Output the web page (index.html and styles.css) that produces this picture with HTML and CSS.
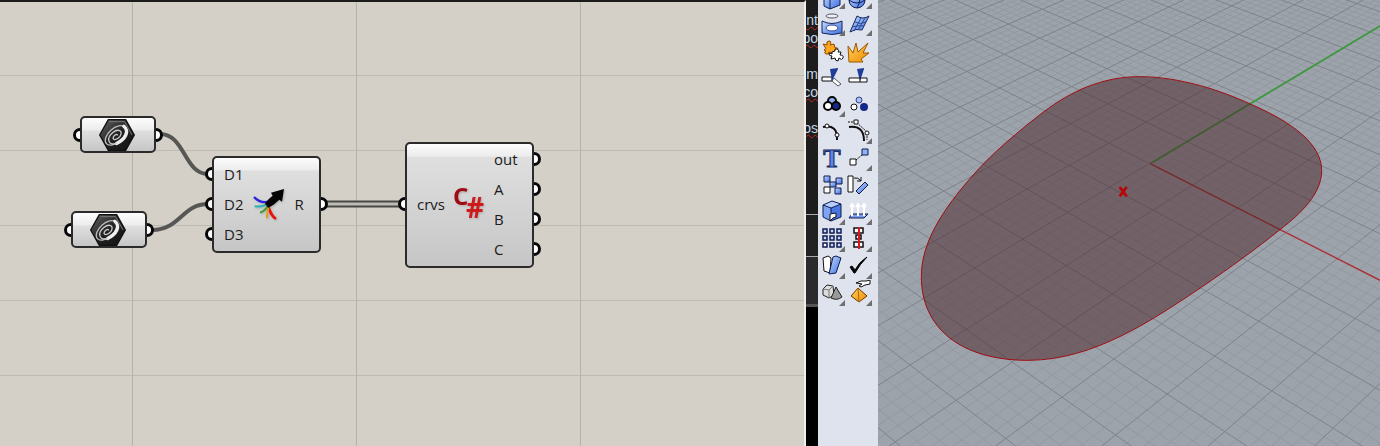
FILE: index.html
```html
<!DOCTYPE html>
<html lang="en">
<head>
<meta charset="utf-8">
<title>Surface from curves</title>
<link rel="stylesheet" href="styles.css">
</head>
<body>
<svg class="defs" aria-hidden="true">
  <defs>
    <linearGradient id="blue" x1="0" y1="0" x2="1" y2="1"><stop offset="0" stop-color="#c4dbff"/><stop offset="1" stop-color="#3f6fe0"/></linearGradient>
    <linearGradient id="gold" x1="0" y1="0" x2="1" y2="1"><stop offset="0" stop-color="#ffd060"/><stop offset="1" stop-color="#f08c00"/></linearGradient>
    <linearGradient id="coal" x1="0" y1="0" x2="1" y2="1"><stop offset="0" stop-color="#666"/><stop offset=".5" stop-color="#222"/><stop offset="1" stop-color="#111"/></linearGradient>
    <symbol id="curve" viewBox="0 0 108 96">
      <path d="M28 2H80L106 48 80 94H28L2 48Z" fill="url(#coal)" stroke="#111" stroke-width="4" stroke-linejoin="round"/>
      <path d="M31 8H77L99 48" fill="none" stroke="#777" stroke-width="3"/>
      <g fill="none" stroke="#eee" transform="rotate(-42 54 48)">
        <ellipse cx="50" cy="46" rx="37" ry="21" stroke="#bbb" stroke-width="4"/>
        <path d="M87 42C90 66 64 74 36 66" stroke-width="10" stroke-linecap="round"/>
        <path d="M36 66C12 54 24 32 50 34C72 36 76 52 58 57C42 60 32 50 42 45C50 42 58 46 54 50" stroke="#ccc" stroke-width="4"/>
      </g>
    </symbol>
  </defs>
</svg>
<main class="app">
  <section class="canvas" aria-label="Node canvas">
    <svg class="wires" width="600" height="300" aria-hidden="true">
      <g fill="none" stroke="#565654" stroke-width="4">
        <path d="M160 134C185 134 184 174 208 174"/>
        <path d="M152 230C180 230 182 204 208 204"/>
      </g>
      <path d="M326 204H400" stroke="#474743" stroke-width="7"/>
      <path d="M326 204H400" stroke="#bdbcb4" stroke-width="3"/>
    </svg>
    <div class="node param first"><i class="port in"></i><svg class="hex"><use href="#curve"/></svg><i class="port out"></i></div>
    <div class="node param second"><i class="port in"></i><svg class="hex"><use href="#curve"/></svg><i class="port out"></i></div>
    <div class="node merge">
      <ul><li><i class="port in"></i>D1</li><li><i class="port in"></i>D2</li><li><i class="port in"></i>D3</li></ul>
      <svg class="icon" viewBox="160 143 96 96" fill="none" stroke-width="6">
        <path d="M205 196C212 215 214 226 229 236" stroke="#e81212" stroke-width="8"/>
        <path d="M206 196C206 212 201 218 202 233" stroke="#e69b1c"/>
        <path d="M206 192C202 204 194 212 181 217" stroke="#389a35"/>
        <path d="M206 188C195 198 182 200 165 198" stroke="#25b4b4"/>
        <path d="M207 184C190 188 174 182 163 170" stroke="#2a22e0" stroke-width="7"/>
        <path d="M196 190C203 180 210 172 219 166L214 157 253 146 247 184 239 178C228 188 220 196 206 202Z" fill="#050505"/>
      </svg>
      <ul class="right"><li>R<i class="port out"></i></li></ul>
    </div>
    <div class="node script">
      <ul><li><i class="port in"></i>crvs</li></ul>
      <svg class="icon" viewBox="0 0 32 32"><text class="c" x="0" y="17">C</text><text class="hash" x="13" y="30">#</text></svg>
      <ul class="right"><li>out<i class="port out"></i></li><li>A<i class="port out"></i></li><li>B<i class="port out"></i></li><li>C<i class="port out"></i></li></ul>
    </div>
  </section>

  <aside class="editor" aria-label="Code editor">
    <p class="line"><span>nt</span></p>
    <p class="line"><span>po</span></p>
    <p class="line"></p>
    <p class="line plain"><span>m</span></p>
    <p class="line"><span>co</span></p>
    <p class="line"></p>
    <p class="line"><span>os</span></p>
    <div class="pane"></div>
    <div class="pane low"></div>
  </aside>

  <nav class="tools" aria-label="Tools">
    <button class="more" aria-label="Box"><svg viewBox="0 0 27 27"><path d="M5 10 16 8 21 11V22L11 26 5 23Z" fill="url(#blue)" stroke="#101c50"/><path d="M5 10 11 14 21 11M11 14V26" fill="none" stroke="#101c50"/></svg></button>
    <button class="more" aria-label="Sphere"><svg viewBox="0 0 27 27"><circle cx="11" cy="17" r="8" fill="url(#blue)" stroke="#101c50"/><path d="M3 17Q11 23 19 17M12 9Q16 17 11 25" fill="none" stroke="#101c50"/></svg></button>

    <button class="more" aria-label="Project curve"><svg viewBox="0 0 27 27"><path d="M3 11Q13 16 23 11V23Q13 26 3 23Z" fill="url(#blue)" stroke="#15265f"/><ellipse cx="13" cy="6" rx="6" ry="2" fill="#eef" stroke="#555"/><ellipse cx="13" cy="18" rx="6" ry="3" fill="#fff" stroke="#334a90"/></svg></button>
    <button class="more" aria-label="Surface"><svg viewBox="0 0 27 27"><path d="M11 6Q17 10 23 6L16 20Q10 18 4 22Z" fill="url(#blue)" stroke="#15265f"/><path d="M9 12Q14 15 20 12M6 17Q12 15 18 16M15 8 8 21M19 8 12 20" fill="none" stroke="#2c4790"/></svg></button>

    <button aria-label="Join"><svg viewBox="0 0 27 27"><path d="M4 7 8 8Q7 4 10 4T11 8L15 7 16 11Q19 10 19 12T15 14L14 16 10 15Q10 18 7 17T7 14L5 13Q8 11 6 10Z" fill="#ffa51e" stroke="#8b4b00"/><path d="M13 15 16 14Q15 11 18 12T19 15L22 15 21 18Q25 18 24 21T20 21L19 24Q16 24 16 21L12 22 13 19Q10 19 10 17T13 17Z" fill="#fff" stroke="#111"/></svg></button>
    <button aria-label="Explode"><svg viewBox="0 0 27 27"><path d="M2 9 7 16 10 6 12 15 22 6 17 16 23 16 15 22 17 25H3Z" fill="url(#gold)" stroke="#9c5900"/></svg></button>

    <button aria-label="Trim"><svg viewBox="0 0 27 27"><path d="M3 13H13V17H3Z" fill="#fff" stroke="#111"/><path d="M15 14 22 20 19 22 13 17Z" fill="#fff" stroke="#555"/><path d="M19 4V5L13 17 11 5Z" fill="#1f3d96"/></svg></button>
    <button aria-label="Split"><svg viewBox="0 0 27 27"><path d="M3 14H21V18H3Z" fill="#fff" stroke="#111"/><path d="M18 4V5L14 17 11 5Z" fill="#1f3d96"/><path d="M14 13V18" stroke="#111"/></svg></button>

    <button class="more" aria-label="Boolean"><svg viewBox="0 0 27 27"><g stroke="#050505" stroke-width="2"><circle cx="13" cy="10" r="4" fill="#8fb2f5"/><circle cx="9" cy="15" r="4" fill="#fff"/><circle cx="17" cy="15" r="4" fill="#14288a"/></g></svg></button>
    <button aria-label="Group"><svg viewBox="0 0 27 27"><circle cx="13" cy="9" r="3" fill="#a9c1fb" stroke="#33427a"/><circle cx="8" cy="16" r="3" fill="#fff" stroke="#111"/><circle cx="18" cy="16" r="4" fill="#14288a"/></svg></button>

    <button aria-label="Edit points"><svg viewBox="0 0 27 27"><path d="M4 9Q19 6 18 22" fill="none" stroke="#111" stroke-width="2"/><g fill="#fff" stroke="#111"><circle cx="8" cy="8" r="2"/><circle cx="18" cy="17" r="2"/></g></svg></button>
    <button class="more" aria-label="Control points"><svg viewBox="0 0 27 27"><path d="M3 9Q18 7 18 23" fill="none" stroke="#111" stroke-width="2"/><path d="M2 4H10L21 14V22" fill="none" stroke="#111" stroke-dasharray="2 1"/><g fill="#fff" stroke="#111"><path d="M8 2H12V6H8Z"/><circle cx="21" cy="15" r="2"/></g></svg></button>

    <button aria-label="Text"><svg viewBox="0 0 27 27"><text class="tee" x="13" y="22">T</text></svg></button>
    <button class="more" aria-label="Move"><svg viewBox="0 0 27 27"><path d="M10 15 16 10" stroke="#111" stroke-dasharray="2 1"/><path d="M4 14H10V20H4Z" fill="#fff" stroke="#111"/><path d="M16 4H22V10H16Z" fill="#8fb2f5" stroke="#101c50"/></svg></button>

    <button aria-label="Array"><svg viewBox="0 0 27 27"><g fill="url(#blue)" stroke="#101c50"><path d="M5 4H11V10H5Z"/><path d="M17 6H23V12H17Z"/><path d="M16 16H22V22H16Z"/><path d="M11 10H17V15H11Z"/></g><path d="M5 15H11V21H5Z" fill="#fff" stroke="#111"/></svg></button>
    <button aria-label="Orient"><svg viewBox="0 0 27 27"><path d="M2 4H7V20H2Z" fill="#fff" stroke="#111"/><path d="M10 19 19 10 22 13 13 22Z" fill="url(#blue)" stroke="#101c50"/><path d="M8 6Q12 5 15 9M15 5V9H11" fill="none" stroke="#111"/></svg></button>

    <button class="more" aria-label="Solid edit"><svg viewBox="0 0 27 27"><path d="M4 6V18L12 22V9Z" fill="#7da4f5"/><path d="M12 9V22L22 18V5Z" fill="#4a78e0"/><path d="M4 6 13 2 22 5 12 9Z" fill="#b4ceff"/><path d="M4 6 13 2 22 5V18L12 22 4 18ZM4 6 12 9 22 5M12 9V14" fill="none" stroke="#101c50"/><path d="M11 15 17 14V18L14 19 11 22Z" fill="#fff" stroke="#111"/></svg></button>
    <button class="more" aria-label="Extrude"><svg viewBox="0 0 27 27"><path d="M6 15H22L18 19H3Z" fill="#7da0f0" stroke="#101c50"/><path d="M6 17V6M12 17V6M18 17V6M4 8 6 5 8 8M10 8 12 5 14 8M16 8 18 5 20 8" fill="none" stroke="#fff" stroke-width="2"/></svg></button>

    <button class="more" aria-label="Rectangular array"><svg viewBox="0 0 27 27"><g stroke="#101c50" stroke-width="1.5"><path d="M4 3H8V7H4ZM11 3H15V7H11ZM18 3H22V7H18ZM4 10H8V14H4ZM11 10H15V14H11ZM18 10H22V14H18ZM11 17H15V21H11ZM18 17H22V21H18Z" fill="#c4d5ff"/><path d="M4 17H8V21H4Z" fill="#fff"/></g></svg></button>
    <button class="more" aria-label="Align"><svg viewBox="0 0 27 27"><path d="M8 2H17V7H8ZM10 9H15V13H10ZM8 16H17V21H8Z" fill="#fff" stroke="#111" stroke-width="1.5"/><path d="M13 1V23" stroke="#e0121e" stroke-width="2"/></svg></button>

    <button class="more" aria-label="Shear"><svg viewBox="0 0 27 27"><path d="M4 5 9 3 12 5 11 20 5 18Z" fill="#fff" stroke="#111"/><path d="M14 4 17 3 22 5 17 20 10 21Z" fill="url(#blue)" stroke="#101c50"/></svg></button>
    <button class="more" aria-label="Check"><svg viewBox="0 0 27 27"><path d="M4 14 6 13 9 17Q13 9 21 4Q14 11 9 20H8Z" fill="#050505" stroke="#050505"/></svg></button>

    <button class="more" aria-label="Primitives"><svg viewBox="0 0 27 27"><path d="M4 9 8 5 14 6 15 15 10 18 4 15Z" fill="#ddd" stroke="#222"/><path d="M4 9 10 10 14 6M10 10V18" fill="none" stroke="#777"/><path d="M17 7 23 17Q18 21 12 18Z" fill="#999" stroke="#222"/></svg></button>
    <button class="more" aria-label="Render"><svg viewBox="0 0 27 27"><path d="M12 8 21 16 13 22 5 16Z" fill="url(#gold)" stroke="#6b3d00"/><path d="M12 8 13 22" stroke="#a96800"/><path d="M10 3 15 1 20 1 24 0V4L19 5 15 7 13 6 16 4Z" fill="#fff" stroke="#111"/></svg></button>
  </nav>

  <section class="viewport" aria-label="Perspective view">
    <svg viewBox="0 0 1506 1338" preserveAspectRatio="xMinYMin slice">
      <path class="minor" id="minor"/>
      <path class="major" id="major"/>
      <path class="axis-y" d="M817 491 1506 78"/>
      <path class="axis-x" d="M817 491 1506 841"/>
      <path class="surface" d="M785 230C905 230 1030 272 1117 312C1240 366 1331 430 1331 512C1331 580 1270 640 1207 688C1130 750 1060 800 970 862C830 955 650 1081 450 1081C250 1081 130 985 130 830C130 730 190 632 290 520C345 458 420 395 500 333C580 275 670 230 785 230Z"/>
      <path class="mark" d="M725 561 746 589M746 561 725 589"/>
    </svg>
  </section>
</main>
<script src="grid.js"></script>
</body>
</html>
```

FILE: styles.css
```css
* { box-sizing: border-box; }
body { margin: 0; background: #000; font-family: "Open Sans", "Noto Sans", sans-serif; }
.defs { position: absolute; width: 0; height: 0; }
.app { display: flex; height: 100vh; overflow: hidden; }

.canvas {
  position: relative;
  flex: 804 1 2px;
  min-width: 0;
  overflow: hidden;
  border-top: 2px solid #1c1b19;
  border-right: 2px solid #efeee9;
  background-color: #d4d0c8;
  background-image:
    linear-gradient(90deg, #b4b2aa 1px, transparent 1px),
    linear-gradient(#bdbab2 1px, transparent 1px);
  background-size: 224px 100%, 100% 75px;
  background-position: 132px 0, 0 73px;
}
.wires { position: absolute; left: 0; top: -2px; }
.node {
  position: absolute;
  display: flex;
  align-items: center;
  border: 2px solid #2b2b2b;
  border-radius: 5px;
  background: linear-gradient(#fdfdfd, #ececec 12px, #dfdfdf 13px, #c6c6c6);
  color: #1b1b1b;
  font-size: 15px;
  line-height: 30px;
}
.param { width: 76px; height: 37px; padding-right: 2px; justify-content: center; }
.first { left: 80px; top: 114px; }
.second { left: 71px; top: 209px; }
.merge { left: 212px; top: 154px; width: 109px; padding: 1px 0 2px; }
.script { left: 405px; top: 140px; width: 129px; padding: 0 0 2px; }
.hex { width: 36px; height: 32px; }
.node ul { margin: 0; padding: 0 0 0 10px; list-style: none; }
.node li { position: relative; margin-left: -10px; padding-left: 10px; }
.node .icon { width: 32px; height: 32px; margin-left: 10px; overflow: visible; filter: drop-shadow(1px 1px 1px #8888); }
.node.script .icon { margin-left: 8px; }
.node .right { flex: 1; padding-left: 9px; }
.node .right li { margin-left: 0; padding-left: 0; }
.port {
  position: absolute;
  top: calc(50% - 7px);
  width: 7px;
  height: 14px;
  border: 3px solid #050505;
  background: #fff;
}
.port.in { left: -9px; border-right: 0; border-radius: 7px 0 0 7px; }
.port.out { right: -9px; border-left: 0; border-radius: 0 7px 7px 0; }
.c { font: bold 24px "Open Sans", sans-serif; fill: #a00a12; }
.hash { font: bold 28px "Open Sans", sans-serif; fill: #cf1a1c; }

.editor {
  flex: none;
  width: 12px;
  overflow: hidden;
  padding-top: 11px;
  background: #000;
  box-shadow: inset 0 262px #1d1d1d;
  color: #c2d6e6;
  font: 14px/18px "Liberation Sans", Arial, sans-serif;
}
.line { display: flex; justify-content: flex-end; height: 18px; margin: 0; }
.line span { text-decoration: underline wavy #c22a25 1px; }
.plain span { text-decoration: none; }
.pane { height: 43px; margin-top: 77px; border-top: 1px solid #aaa; border-bottom: 1px solid #aaa; background: #222; }
.pane.low { height: 50px; margin-top: 0; border-top: 0; border-bottom: 3px solid #555; background: #2b2b2d; }

.tools {
  flex: none;
  display: grid;
  grid-template-columns: 27px 27px;
  grid-auto-rows: 27px;
  align-content: start;
  width: 60px;
  height: 100%;
  padding-left: 1px;
  margin-top: -17px;
  background: #dfe3ee;
  box-shadow: 0 17px #dfe3ee;
}
.tools button { position: relative; padding: 0; border: 0; background: none; }
.tools svg { display: block; width: 27px; height: 27px; }
.more::after {
  content: "";
  position: absolute;
  right: 1px;
  bottom: 1px;
  border: 3px solid #6f6f6f;
  border-top-color: transparent;
  border-left-color: transparent;
}
.tee { font: bold 26px "Liberation Serif", serif; text-anchor: middle; fill: #5d87e8; stroke: #15265f; }

.viewport { flex: 502 1 0; min-width: 0; background: #9da3ab; }
.viewport svg { display: block; width: 100%; height: 100%; }
.viewport path { fill: none; stroke-width: 3; }
.viewport .minor { stroke: #9299a2; }
.viewport .major { stroke: #7e828b; }
.viewport .axis-x { stroke: #ae3035; stroke-width: 4; }
.viewport .axis-y { stroke: #3b9a3b; stroke-width: 5; }
.viewport .surface { fill: #47212680; stroke: #a00d12; }
.viewport .mark { stroke: #b80505; stroke-width: 8; }
```

FILE: grid.js
```js
// Ground-plane calibration: [plane x, plane y, view x, view y]
const points = [
  [0, 0, 817, 491], [-1, 0, 693, 430], [-2, 0, 577, 371], [-4, 0, 366, 264],
  [-5, 0, 268, 214], [-6, 0, 172, 167], [-7, 0, 84, 123], [-6, 1, 285, 118],
  [0, -1, 696, 563], [1, -1, 826, 632], [0, -2, 570, 636], [0, -3, 433, 718],
  [0, -4, 291, 803], [1, -2, 698, 712], [2, -2, 837, 789], [1, -3, 565, 798],
  [2, -3, 703, 881], [3, -3, 850, 971], [4, -3, 1010, 1070], [5, -3, 1181, 1172],
  [6, -3, 1364, 1285], [4, -2, 1143, 963], [1, -4, 418, 887], [2, -4, 558, 980],
  [1, -6, 95, 1095], [2, -6, 233, 1200], [3, -6, 385, 1317], [2, -5, 403, 1085],
  [2, -7, 52, 1325], [-1, 4, 1106, 198], [-1, 5, 1193, 147], [-1, 6, 1278, 100],
  [-1, 7, 1358, 53], [1, 4, 1349, 297], [1, 5, 1436, 242], [2, 3, 1388, 413],
  [-2, 6, 1166, 57]
];

// Least-squares homography, bottom-right term fixed at 1.
function solve(samples) {
  const m = Array.from({ length: 8 }, () => new Array(9).fill(0));
  const add = row => {
    for (let i = 0; i < 8; i++) for (let j = 0; j < 9; j++) m[i][j] += row[i] * row[j];
  };
  for (const [x, y, u, v] of samples) {
    add([x, y, 1, 0, 0, 0, -u * x, -u * y, u]);
    add([0, 0, 0, x, y, 1, -v * x, -v * y, v]);
  }
  for (let c = 0; c < 8; c++) {
    let p = c;
    for (let r = c; r < 8; r++) if (Math.abs(m[r][c]) > Math.abs(m[p][c])) p = r;
    [m[c], m[p]] = [m[p], m[c]];
    for (let r = 0; r < 8; r++) {
      if (r === c) continue;
      const f = m[r][c] / m[c][c];
      for (let k = c; k < 9; k++) m[r][k] -= f * m[c][k];
    }
  }
  return m.map((row, i) => row[8] / row[i]);
}

const h = solve(points);
const project = (x, y) => {
  const w = h[6] * x + h[7] * y + 1;
  return ((h[0] * x + h[1] * y + h[2]) / w).toFixed(1) + " " +
         ((h[3] * x + h[4] * y + h[5]) / w).toFixed(1);
};

const x0 = -24, x1 = 12, y0 = -11, y1 = 30;
let minor = "", major = "";
for (let i = x0 * 5; i <= x1 * 5; i++) {
  const d = "M" + project(i / 5, y0) + "L" + project(i / 5, y1);
  if (i % 5) minor += d; else major += d;
}
for (let i = y0 * 5; i <= y1 * 5; i++) {
  const d = "M" + project(x0, i / 5) + "L" + project(x1, i / 5);
  if (i % 5) minor += d; else major += d;
}
document.getElementById("minor").setAttribute("d", minor);
document.getElementById("major").setAttribute("d", major);
```
